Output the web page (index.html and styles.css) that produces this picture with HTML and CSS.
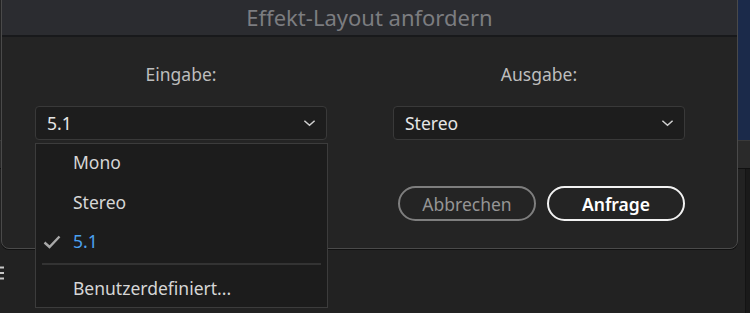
FILE: index.html
```html
<!DOCTYPE html>
<html lang="de">
<head>
    <meta charset="UTF-8">
    <meta name="viewport" content="width=device-width, initial-scale=1.0">
    <title>Effekt-Layout anfordern</title>
    <link rel="stylesheet" href="styles.css">
</head>
<body>
    <div class="app">
        <div class="app-top">
            <div class="app-view"></div>
            <div class="app-monitor"></div>
        </div>
        <div class="app-toolbar"></div>
        <div class="app-bottom">
            <div class="app-panel">
                <svg class="panel-menu" viewBox="0 0 8 14"><path d="M0 1.5h7M0 7h7M0 12.5h7"/></svg>
            </div>
            <div class="app-side"></div>
        </div>
    </div>

    <div class="dialog">
        <div class="dialog-title">Effekt-Layout anfordern</div>
        <div class="dialog-body">
            <div class="fields">
                <div class="field">
                    <label>Eingabe:</label>
                    <div class="select">
                        <span>5.1</span>
                        <svg viewBox="0 0 14 8"><path d="M1.5 1.5 7 6.5 12.5 1.5"/></svg>
                    </div>
                </div>
                <div class="field">
                    <label>Ausgabe:</label>
                    <div class="select">
                        <span>Stereo</span>
                        <svg viewBox="0 0 14 8"><path d="M1.5 1.5 7 6.5 12.5 1.5"/></svg>
                    </div>
                </div>
            </div>
            <div class="buttons">
                <button class="btn btn-cancel">Abbrechen</button>
                <button class="btn btn-primary">Anfrage</button>
            </div>
        </div>
    </div>

    <ul class="menu">
        <li>Mono</li>
        <li>Stereo</li>
        <li class="checked">
            <svg class="check" viewBox="0 0 18 14"><path d="M1.5 7.5 6.5 12 16.5 1.5"/></svg>
            5.1
        </li>
        <li class="sep"></li>
        <li>Benutzerdefiniert...</li>
    </ul>
</body>
</html>
```

FILE: styles.css
```css
* {
    margin: 0;
    padding: 0;
    box-sizing: border-box;
}
body {
    width: 750px;
    height: 313px;
    overflow: hidden;
    background: #1e1e1e;
    font-family: "Noto Sans", sans-serif;
    position: relative;
}
.app {
    display: flex;
    flex-direction: column;
    height: 313px;
}
.app-top {
    display: flex;
    height: 140px;
}
.app-view {
    flex: 1;
    background: #232323;
}
.app-monitor {
    width: 12px;
    background: #1b2a4a;
}
.app-toolbar {
    height: 29px;
    background: #2a2a2a;
    border-top: 1px solid #3a3a3a;
    border-bottom: 1px solid #111;
}
.app-bottom {
    flex: 1;
    display: flex;
}
.app-panel {
    flex: 1;
    background: #222222;
    border-right: 1px solid #141414;
    padding-top: 97px;
}
.app-side {
    width: 4px;
    background: #1a1a1a;
}
.panel-menu {
    display: block;
    width: 8px;
    height: 14px;
    margin-left: -3px;
    fill: none;
    stroke: #c8c8c8;
    stroke-width: 2;
}

/* dialog */
.dialog {
    position: absolute;
    left: 1px;
    top: -8px;
    width: 737px;
    height: 257px;
    background: #242424;
    border: 1px solid #4a4a4a;
    border-radius: 8px;
    overflow: hidden;
    display: flex;
    flex-direction: column;
    box-shadow: 0 1px 0 #111;
}
.dialog-title {
    height: 44px;
    padding-top: 10px;
    background: #2b2c30;
    border-bottom: 2px solid #18191b;
    text-align: center;
    color: #7c7d80;
    font-size: 22px;
    line-height: 28px;
}
.dialog-body {
    flex: 1;
    padding: 0 52px 0 33px;
}
.fields {
    display: flex;
    gap: 66px;
    padding-top: 25px;
}
.field {
    width: 292px;
    display: flex;
    flex-direction: column;
    align-items: center;
}
.field label {
    color: #bdbdbd;
    font-size: 17.5px;
    line-height: 24px;
    margin-bottom: 20px;
}
.select {
    width: 100%;
    height: 34px;
    background: #1d1d1d;
    border: 1px solid #393939;
    border-radius: 4px;
    display: flex;
    align-items: center;
    justify-content: space-between;
    padding: 0 10px 0 11px;
    color: #e6e6e6;
    font-size: 17.5px;
}
.select svg {
    width: 13px;
    height: 8px;
    fill: none;
    stroke: #d0d0d0;
    stroke-width: 1.6;
}
.buttons {
    display: flex;
    justify-content: flex-end;
    gap: 11px;
    margin-top: 46px;
}
.btn {
    width: 138px;
    height: 35px;
    border-radius: 18px;
    background: transparent;
    font-family: "Noto Sans", sans-serif;
    font-size: 17.5px;
}
.btn-cancel {
    border: 2px solid #7e7e7e;
    color: #959595;
}
.btn-primary {
    border: 2px solid #f2f2f2;
    color: #ffffff;
    font-weight: 600;
}

/* dropdown menu */
.menu {
    position: absolute;
    left: 35px;
    top: 143px;
    width: 293px;
    height: 165px;
    list-style: none;
    background: #1c1c1c;
    border: 1px solid #3c3c3c;
    padding-top: 4px;
}
.menu li {
    position: relative;
    height: 39.5px;
    line-height: 28px;
    padding-left: 37px;
    color: #d6d6d6;
    font-size: 17.5px;
}
.menu li.checked {
    color: #4ba0f0;
}
.menu .check {
    position: absolute;
    left: 7px;
    top: 8px;
    width: 18px;
    height: 14px;
    fill: none;
    stroke: #a8a8a8;
    stroke-width: 2.4;
}
.menu li.sep {
    height: 2px;
    margin: -4px 6px 9px 6px;
    padding: 0;
    background: #333;
}
```
